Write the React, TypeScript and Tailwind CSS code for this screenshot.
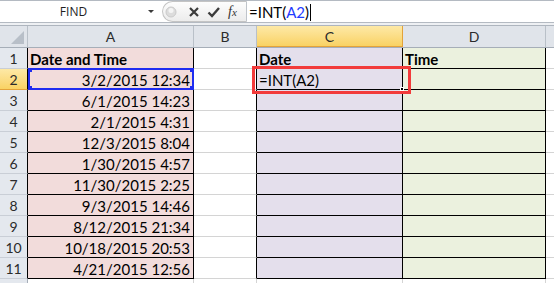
const values = [
  "3/2/2015 12:34",
  "6/1/2015 14:23",
  "2/1/2015 4:31",
  "12/3/2015 8:04",
  "1/30/2015 4:57",
  "11/30/2015 2:25",
  "9/3/2015 14:46",
  "8/12/2015 21:34",
  "10/18/2015 20:53",
  "4/21/2015 12:56",
];

const font = "font-['Lato','Liberation_Sans',sans-serif]";

function FormulaBar() {
  return (
    <div className="h-[26px] flex flex-col">
      <div className="h-[23px] flex border-y border-[#b4bac2] bg-white">
        {/* name box */}
        <div className="w-[162px] flex items-center">
          <span className="w-[147px] text-center text-[12px] text-[#1e1e1e] font-['Open_Sans',sans-serif]">FIND</span>
          <svg width="8" height="5" viewBox="0 0 8 5">
            <polygon points="1,1 7,1 4,4" fill="#3a3a3a" />
          </svg>
        </div>
        {/* buttons */}
        <div className="w-[85px] flex items-center rounded-l-full border-l border-y border-[#c4c4c4] bg-gradient-to-b from-[#fdfdfd] to-[#ececec] border-r border-r-[#bfc4ca]">
          <svg width="12" height="12" viewBox="0 0 12 12" className="ml-[2px]">
            <circle cx="6" cy="6" r="5" fill="#dcdcdc" stroke="#cacaca" />
            <circle cx="6" cy="4.5" r="2.5" fill="#f4f4f4" />
          </svg>
          <svg width="12" height="12" viewBox="0 0 12 12" className="ml-[11px]">
            <path d="M2 2 L10 10 M10 2 L2 10" stroke="#3b3b3b" strokeWidth="2.2" />
          </svg>
          <svg width="13" height="12" viewBox="0 0 13 12" className="ml-[7px]">
            <path d="M1.5 6.5 L5 10 L12 2" stroke="#3b3b3b" strokeWidth="2.4" fill="none" />
          </svg>
          <span className="ml-[8px] text-[14px] italic font-['Liberation_Serif',serif] text-[#333] leading-none">
            f<span className="text-[11px]">x</span>
          </span>
        </div>
        {/* formula */}
        <div className={`flex-1 flex items-center pl-[2px] pt-[1px] text-[15px] text-black ${font}`}>
          <span>=INT(</span>
          <span className="text-[#1f3cff]">A2</span>
          <span>)</span>
          <span className="ml-[1px] w-px h-[17px] bg-black" />
        </div>
      </div>
      <div className="flex-1 bg-[#eef0f3] border-b border-[#aeb5be]" />
    </div>
  );
}

function HeaderRow() {
  const cell = "h-full flex items-center justify-center border-r border-[#b9c0c8] text-[14px] text-[#2b2b2b]";
  return (
    <div className={`h-[22px] flex bg-[#e0e4ea] border-b border-[#a6aeb8] ${font}`}>
      <div className="w-[28px] h-full border-r border-[#b9c0c8] flex items-end justify-end pr-[2px] pb-[2px]">
        <svg width="14" height="14" viewBox="0 0 14 14">
          <polygon points="13,0 13,13 0,13" fill="#b8bfc8" />
        </svg>
      </div>
      <div className={`w-[166px] ${cell}`}>A</div>
      <div className={`w-[63px] ${cell}`}>B</div>
      <div className="w-[146px] h-full flex items-center justify-center border-r border-b border-[#e3a33a] bg-gradient-to-b from-[#fde9a6] to-[#f9d262] text-[14px] text-[#2b2b2b] -mb-px">
        C
      </div>
      <div className={`w-[143px] ${cell}`}>D</div>
      <div className="flex-1 h-full" />
    </div>
  );
}

function DataRow({ n }: { n: number }) {
  const selected = n === 2;
  const a = n === 1 ? "Date and Time" : values[n - 2];
  return (
    <div className={`h-[21px] flex text-[15px] text-black ${font}`}>
      <div
        className={`w-[28px] h-full flex items-center justify-center pt-[1px] text-[14px] text-[#2b2b2b] border-r border-r-black border-b ${
          selected
            ? "bg-gradient-to-b from-[#fde9a6] to-[#f9d262] border-b-[#e3a33a]"
            : "bg-[#e4e8ee] border-b-[#c9ced6]"
        }`}
      >
        {n}
      </div>
      <div
        className={`w-[166px] h-full flex items-center pt-[2px] bg-[#f2dcdb] border-r border-b border-black ${
          n === 1 ? "justify-start pl-[2px] font-bold" : "justify-end pr-[3px]"
        }`}
      >
        {a}
      </div>
      <div className="w-[63px] h-full border-r border-r-black border-b border-b-[#d4d4d4]" />
      <div className={`w-[146px] h-full flex items-center pt-[2px] pl-[2px] bg-[#e4dfec] border-r border-b border-black ${n === 1 ? "font-bold" : ""}`}>
        {n === 1 ? "Date" : n === 2 ? "=INT(A2)" : ""}
      </div>
      <div className={`w-[143px] h-full flex items-center pt-[2px] pl-[2px] bg-[#ebf1de] border-r border-b border-black ${n === 1 ? "font-bold" : ""}`}>
        {n === 1 ? "Time" : ""}
      </div>
      <div className="flex-1 h-full border-b border-[#d4d4d4]" />
    </div>
  );
}

export default function App() {
  return (
    <div className="relative w-[554px] h-[283px] overflow-hidden bg-white flex flex-col">
      <FormulaBar />
      <HeaderRow />
      {Array.from({ length: 11 }, (_, i) => (
        <DataRow key={i} n={i + 1} />
      ))}
      <div className="flex-1 flex">
        <div className="w-[28px] h-full bg-[#e4e8ee] border-r border-[#a6aeb8]" />
        <div className="w-[166px] h-full border-r border-[#d4d4d4]" />
        <div className="w-[63px] h-full border-r border-[#d4d4d4]" />
        <div className="w-[146px] h-full border-r border-[#d4d4d4]" />
        <div className="w-[143px] h-full border-r border-[#d4d4d4]" />
      </div>

      {/* range highlight on A2 */}
      <div className="absolute left-[28px] top-[68px] w-[166px] h-[22px] border-2 border-[#1f2cf0]">
        <div className="absolute -left-[2px] -top-[2px] w-[4px] h-[4px] bg-[#1f2cf0]" />
        <div className="absolute -right-[2px] -top-[2px] w-[4px] h-[4px] bg-[#1f2cf0]" />
        <div className="absolute -left-[2px] -bottom-[2px] w-[4px] h-[4px] bg-[#1f2cf0]" />
        <div className="absolute -right-[2px] -bottom-[2px] w-[4px] h-[4px] bg-[#1f2cf0]" />
      </div>

      {/* fill handle on C2 */}
      <div className="absolute left-[400px] top-[87px] w-[4px] h-[4px] bg-black border border-white" />

      {/* red callout */}
      <div className="absolute left-[252px] top-[66px] w-[159px] h-[28px] border-[3px] border-[#f23b3b]" />
    </div>
  );
}
